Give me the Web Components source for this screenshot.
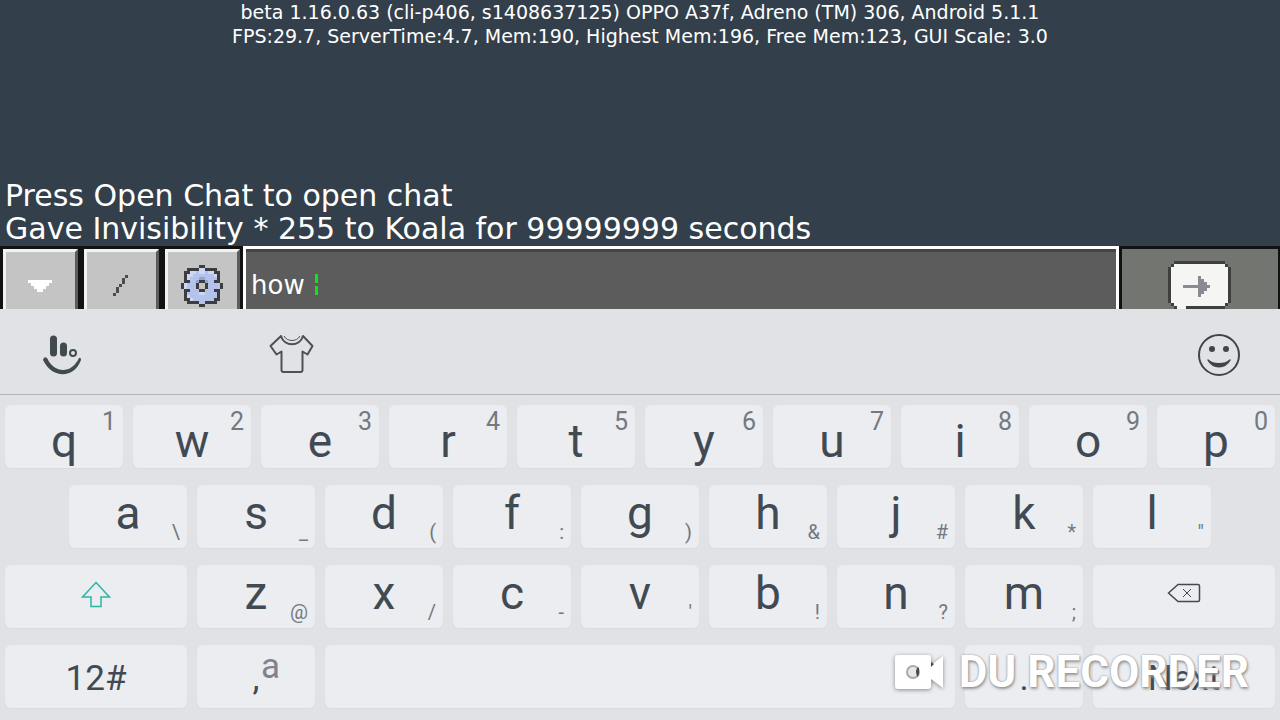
<!DOCTYPE html>
<html lang="en">
<head>
<meta charset="utf-8">
<meta name="viewport" content="width=device-width, initial-scale=1">
<title>Game chat</title>
<style>
html, body { margin: 0; }
body { background: #333f4b; overflow: hidden; }
</style>
</head>
<body>
<game-screen></game-screen>
<script>
const define = (name, html, setup) => {
  const template = document.createElement('template');
  template.innerHTML = html;
  customElements.define(name, class extends HTMLElement {
    constructor() {
      super();
      this.attachShadow({ mode: 'open' }).append(template.content.cloneNode(true));
    }
    connectedCallback() { if (setup) setup(this, this.shadowRoot); }
  });
};

// Turns rows of characters into square SVG cells.
const pixels = (rows, colors) => {
  let out = '';
  rows.forEach((row, y) => [...row].forEach((c, x) => {
    if (colors[c]) out += `<rect x="${x}" y="${y}" width="1" height="1" fill="${colors[c]}"/>`;
  }));
  return out;
};

const gear = pixels([
  '......##......',
  '..####LL####..',
  '.##LLBLLBLL##.',
  '.#LLBBBBBBBL#.',
  '.#LBBBGGBBBB#.',
  '.##BBG##GBB##.',
  '#LBBB#CC#BBBB#',
  '#LBBB#CC#BBBB#',
  '.##BBB##BBB##.',
  '.#BBBBLLBBBB#.',
  '.#LBBBBBBBBB#.',
  '.##LBBBBBBB##.',
  '..####BB####..',
  '......##......'
], { '#': '#3d3d40', L: '#cdd8f6', B: '#b4c3ec', G: '#96a6d0', C: '#c3c3c3' });

define('status-lines', `
<style>
:host { display: block; text-align: center; color: #fff; font: 19px/24px "DejaVu Sans", sans-serif; white-space: nowrap; }
</style>
<slot></slot>`);

define('chat-log', `
<style>
:host { display: block; padding: 0 5px 1px; color: #fff; font: 30px/33px "DejaVu Sans", sans-serif; white-space: nowrap; }
</style>
<slot></slot>`);

define('bar-button', `
<style>
:host { display: block; flex: 0 0 75px; }
button { box-sizing: border-box; display: grid; place-items: center; width: 100%; height: 100%; margin: 0; padding: 10px 2px 0 0; border: solid; border-width: 3px 3px 0; border-color: #f2f2f2 #5c5c5c #5c5c5c #f2f2f2; border-radius: 0; background: #c4c4c4; }
</style>
<button type="button"><slot></slot></button>`, (host, root) => {
  root.querySelector('button').setAttribute('aria-label', host.getAttribute('label'));
});

define('chat-field', `
<style>
:host { display: block; position: relative; flex: 1; min-width: 0; margin-left: -3px; }
input { box-sizing: border-box; display: block; width: 100%; height: 100%; margin: 0; padding: 12px 5px 0; border: solid #fff; border-width: 3px 3px 0; border-radius: 0; outline: 0; background: #5c5c5c; box-shadow: inset 0 3px #454545; color: #fff; font: 26px "DejaVu Sans", sans-serif; }
.caret { position: absolute; left: 72px; top: 28px; width: 3px; height: 21px; background: linear-gradient(#14e01c 9px, transparent 9px 12px, #14e01c 12px); }
</style>
<input type="text" value="how" aria-label="Chat message"><span class="caret"></span>`);

define('send-button', `
<style>
:host { display: block; flex: 0 0 156px; margin-right: 2px; }
button { display: grid; justify-items: center; align-content: start; width: 100%; height: 100%; padding: 12px 2px 0 0; border: 0; background: #737570; }
svg { display: block; }
</style>
<button type="button" aria-label="Send">
<svg width="63" height="48" viewBox="0 0 63 48" shape-rendering="crispEdges">
<path fill="#3e403d" d="M6 0h51v3h3v3h3v36h-3v3h-3v3H18v-3H9v3H6v-3H3v-3H0V6h3V3h3z"/>
<path fill="#f5f5f3" d="M6 3h51v3h3v36h-3v3H18v3H9v-3H6v-3H3V6h3z"/>
<path fill="#8d8993" d="M15 24h15v-9h3v3h3v3h3v3h3v3h-3v3h-3v3h-3v3h-3v-9H15z"/>
</svg>
</button>`);

define('chat-bar', `
<style>
:host { display: flex; gap: 6px; height: 60px; padding: 3px 0 0 3px; background: #101214; }
chat-field { margin-top: -3px; }
send-button { margin-left: -3px; }
svg { display: block; }
</style>
<bar-button label="Suggestions"><svg width="24" height="12" viewBox="0 0 24 12" shape-rendering="crispEdges"><path fill="#fff" d="M0 0h24v3h-3v3h-3v3h-3v3H9V9H6V6H3V3H0z"/></svg></bar-button>
<bar-button label="Commands"><svg width="15" height="21" viewBox="0 0 5 7" shape-rendering="crispEdges"><path fill="#4c4c4c" d="M4 0h1v1H4zM3 1h1v2H3zM2 3h1v1H2zM1 4h1v2H1zM0 6h1v1H0z"/></svg></bar-button>
<bar-button label="Settings"><svg width="42" height="42" viewBox="0 0 14 14" shape-rendering="crispEdges">${gear}</svg></bar-button>
<chat-field></chat-field>
<send-button></send-button>`);

define('tool-strip', `
<style>
:host { display: flex; box-sizing: border-box; height: 86px; padding: 6px 38px 0 40px; align-items: center; border-bottom: 1px solid #b4b5ba; }
button { display: block; padding: 0; border: 0; background: none; }
svg { display: block; }
.theme { margin-left: 184px; }
.emoji { margin-left: auto; }
</style>
<button type="button" aria-label="Keyboard menu"><svg width="44" height="44" viewBox="0 0 44 44" fill="none" stroke="#414a4e">
<path d="M13.500 6v14M23.500 13v7" stroke-width="7" stroke-linecap="round"/>
<circle cx="33" cy="20" r="3" stroke-width="2"/>
<path d="M3 27q1-4 4-2C14 40 31 42 39 25q2-1 2 2C34 46 12 46 3 27z" fill="#414a4e" stroke="none"/>
</svg></button>
<button class="theme" type="button" aria-label="Themes"><svg width="48" height="44" viewBox="0 0 48 44" fill="none" stroke="#4a5257" stroke-width="2" stroke-linejoin="round">
<path d="M13 3L2.500 13l6 8.500 5-3V37q0 2 2 2h17q2 0 2-2V18.500l5 3 5-8.500L35 3c-3 11-19 11-22 0z"/>
<path d="M16 3c3 6 13 6 16 0" stroke-width="1"/>
</svg></button>
<button class="emoji" type="button" aria-label="Emoji"><svg width="46" height="46" viewBox="0 0 46 46">
<circle cx="23" cy="23" r="20" fill="none" stroke="#414548" stroke-width="2"/>
<circle cx="16" cy="17" r="3" fill="#414548"/><circle cx="30" cy="17" r="3" fill="#414548"/>
<path d="M12 28c5 9 17 9 22 0c-5 5 -17 5-22 0z" fill="#414548" stroke="#414548" stroke-width="1.500" stroke-linejoin="round"/>
</svg></button>`);

define('touch-key', `
<style>
:host { display: block; padding: 10px 5px 7px; grid-column: span 2; }
:host([wide]) { grid-column: span 3; }
:host([space]) { grid-column: span 10; }
:host([first]) { grid-column: 2 / span 2; }
button { box-sizing: border-box; display: block; position: relative; width: 100%; height: 63px; padding: 0; border: 0; border-radius: 6px; background: #ebedf1; box-shadow: 0 1px 1px #d9dbdf, 0 0 1px #d6d7db; color: #414a53; font: 46px/54px Roboto, sans-serif; text-align: center; }
:host([row="top"]) button { padding-top: 8px; }
:host([row="mid"]) button { padding-bottom: 8px; }
:host([wide]) button, :host([row="end"]) button { font-size: 35px; line-height: 63px; padding: 2px 0 0; }
:host([wide][label]) button { padding: 0 0 4px; }
.hint { position: absolute; right: 7px; bottom: 4px; color: #737980; font-size: 20px; line-height: 24px; }
:host([row="top"]) .hint { top: 3px; bottom: auto; font-size: 25px; line-height: 28px; }
.alt { position: absolute; left: 64px; top: 2px; color: #80838d; font-size: 35px; line-height: 40px; }
::slotted(svg) { display: block; margin: 0 auto; }
</style>
<button type="button"><slot></slot></button>`, (host, root) => {
  const button = root.querySelector('button');
  for (const name of ['hint', 'alt']) {
    if (!host.hasAttribute(name)) continue;
    const mark = document.createElement('span');
    mark.className = name;
    mark.textContent = host.getAttribute(name);
    button.append(mark);
  }
  if (host.hasAttribute('label')) button.setAttribute('aria-label', host.getAttribute('label'));
});

const keys = (letters, hints, row) => [...letters].map((letter, i) =>
  `<touch-key row="${row}" hint="${hints[i].replace('&', '&amp;').replace('"', '&quot;')}"${letter === 'a' ? ' first' : ''}>${letter}</touch-key>`).join('');

define('touch-keyboard', `
<style>
:host { display: block; background: #e1e2e6; }
.row { display: grid; grid-template-columns: repeat(20, 1fr); }
.row:last-child { padding-bottom: 5px; }
</style>
<tool-strip></tool-strip>
<div class="row">${keys('qwertyuiop', '1234567890', 'top')}</div>
<div class="row">${keys('asdfghjkl', '\\_(:)&#*"', 'mid')}</div>
<div class="row">
<touch-key wide label="Shift"><svg width="30" height="27" viewBox="0 0 30 27"><path d="M15 1.500L28.500 16H20v9.500H10V16H1.500z" fill="none" stroke="#2db5a3" stroke-width="1.500"/></svg></touch-key>${keys('zxcvbnm', "@/-'!?;", 'mid')}<touch-key wide label="Backspace"><svg width="34" height="24" viewBox="0 0 34 24" fill="none" stroke="#44494f"><path d="M1.500 10L11 1.500h20q1.500 0 1.500 1.500v14q0 1.500-1.500 1.500H11z" stroke-width="1.500"/><path d="M16 6l8 8M24 6l-8 8"/></svg></touch-key>
</div>
<div class="row">
<touch-key wide>12#</touch-key><touch-key row="end" alt="a">,</touch-key><touch-key space label="Space"></touch-key><touch-key row="end">.</touch-key><touch-key wide>Next</touch-key>
</div>`);

define('recorder-mark', `
<style>
:host { display: flex; align-items: center; gap: 14px; color: #fff; font: bold 44px/50px Roboto, sans-serif; white-space: nowrap; pointer-events: none; text-shadow: 0 0 2px #888, 1px 2px 3px #999; }
svg { display: block; filter: drop-shadow(0 1px 2px #888); }
</style>
<svg width="50" height="38" viewBox="0 0 50 38"><path fill="#fff" d="M3 2h30q3 0 3 3v7l12-9v32l-12-9v7q0 3-3 3H3q-3 0-3-3V5q0-3 3-3z"/><circle cx="18" cy="19" r="6" fill="#e6e7ea" stroke="#a9abb0" stroke-width="2"/><path d="M23 14q-4 5 0 10l1-4V15zM36 9l3 2-3 3z" fill="#44494f"/></svg>
<span><slot></slot></span>`);

define('game-screen', `
<style>
:host { display: flex; flex-direction: column; position: relative; min-height: 100vh; background: #333f4b; }
.world { display: flex; flex: 1; flex-direction: column; justify-content: space-between; }
recorder-mark { position: absolute; right: 31px; bottom: 23px; }
</style>
<div class="world">
<status-lines><div>beta 1.16.0.63 (cli-p406, s1408637125) OPPO A37f, Adreno (TM) 306, Android 5.1.1</div><div>FPS:29.7, ServerTime:4.7, Mem:190, Highest Mem:196, Free Mem:123, GUI Scale: 3.0</div></status-lines>
<chat-log><div>Press Open Chat to open chat</div><div>Gave Invisibility * 255 to Koala for 99999999 seconds</div></chat-log>
</div>
<chat-bar></chat-bar>
<touch-keyboard></touch-keyboard>
<recorder-mark>DU RECORDER</recorder-mark>`);
</script>
</body>
</html>
